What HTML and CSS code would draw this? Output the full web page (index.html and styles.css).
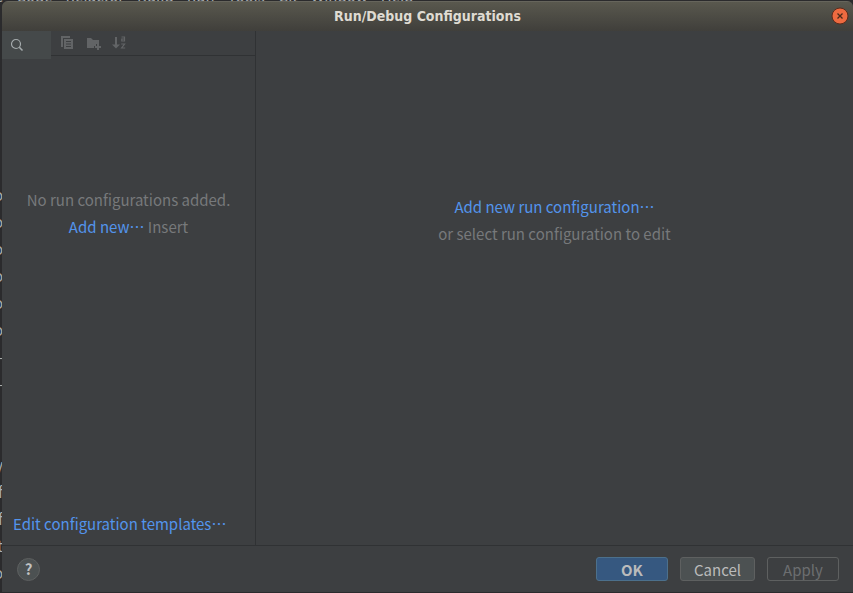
FILE: index.html
```html
<!DOCTYPE html>
<html lang="en">
<head>
    <meta charset="UTF-8">
    <meta name="viewport" content="width=device-width, initial-scale=1.0">
    <title>Run/Debug Configurations</title>
    <link rel="stylesheet" href="styles.css">
</head>
<body>
    <!-- IDE window behind the dialog -->
    <div class="backdrop" aria-hidden="true">
        <div class="backdrop-menu">
            <span>e</span><span>Code</span><span>Refactor</span><span>Build</span><span>Run</span><span>Tools</span><span>Git</span><span>Window</span><span>Help</span>
        </div>
        <div class="backdrop-code">
            <span>o</span>
            <span>o</span>
            <span>o</span>
            <span>o</span>
            <span>o</span>
            <span>o</span>
            <span>-</span>
            <span>-</span>
            <span></span>
            <span></span>
            <span>y</span>
            <span>f</span>
            <span>f</span>
            <span>t</span>
            <span>o</span>
        </div>
    </div>

    <div class="dialog" role="dialog" aria-labelledby="dialog-title">
        <header class="titlebar">
            <h1 id="dialog-title">Run/Debug Configurations</h1>
            <button class="close" type="button" aria-label="Close">
                <svg width="18" height="18" viewBox="0 0 18 18">
                    <circle cx="9" cy="9" r="8" fill="#ee6a40" stroke="#5a2c1c"/>
                    <path d="M6.5 6.5l5 5M11.5 6.5l-5 5" stroke="#4a2a1a" stroke-width="1.3"/>
                </svg>
            </button>
        </header>

        <div class="content">
            <aside class="sidebar">
                <div class="toolbar">
                    <button class="search" type="button" aria-label="Search">
                        <svg width="14" height="14" viewBox="0 0 14 14" fill="none" stroke="#a4aaac">
                            <circle cx="6" cy="6" r="4.5" stroke-width="1.2"/>
                            <path d="M9.3 9.3l3.2 3.2" stroke-width="1.6"/>
                        </svg>
                    </button>
                    <div class="tools">
                        <button type="button" aria-label="Copy configuration" disabled>
                            <svg width="14" height="14" viewBox="0 0 14 14" fill="#626466">
                                <path d="M1 0h9v2H3v9H1z"/>
                                <path fill-rule="evenodd" d="M4 3h9v10H4zM6 5v1h5V5zM6 7.500v1h5v-1zM6 10v1h5v-1z"/>
                            </svg>
                        </button>
                        <button type="button" aria-label="New folder" disabled>
                            <svg width="15" height="14" viewBox="0 0 15 14" fill="#626466">
                                <path d="M1 2h4l2 2h6v4h-3v2H8v2H1z"/>
                                <path d="M11 8h2v2h2v2h-2v2h-2v-2H9v-2h2z"/>
                            </svg>
                        </button>
                        <button type="button" aria-label="Sort configurations" disabled>
                            <svg width="14" height="14" viewBox="0 0 14 14" fill="none" stroke="#626466">
                                <path d="M3 1v9" stroke-width="2"/>
                                <path d="M-1 8.500h8l-4 4z" fill="#626466" stroke="none"/>
                                <path d="M8.500 1h3v4.500M11.500 3H8.800v2h2.700M8.200 8h3.400l-3 4h3.600" stroke-width="1.200"/>
                            </svg>
                        </button>
                    </div>
                </div>
                <div class="empty">
                    <p>No run configurations added.</p>
                    <p><a href="#">Add new<span lang="ja">…</span></a> Insert</p>
                </div>
                <a class="templates" href="#">Edit configuration templates<span lang="ja">…</span></a>
            </aside>

            <main class="details">
                <p><a href="#">Add new run configuration<span lang="ja">…</span></a></p>
                <p>or select run configuration to edit</p>
            </main>
        </div>

        <footer class="footer">
            <button class="help" type="button" aria-label="Help">?</button>
            <div class="actions">
                <button class="btn primary" type="button">OK</button>
                <button class="btn" type="button">Cancel</button>
                <button class="btn" type="button" disabled>Apply</button>
            </div>
        </footer>
    </div>
</body>
</html>
```
FILE: styles.css
```css
* {
    box-sizing: border-box;
}

body {
    margin: 0;
    min-height: 100vh;
    display: flex;
    padding: 1px 0 1px 2px;
    background: #2b2b2d;
    color: #77797b;
    font: 15px/27px "Noto Sans CJK JP", "Noto Sans", sans-serif;
    overflow: hidden;
}

h1,
p {
    margin: 0;
}

a {
    color: #5394ec;
    text-decoration: none;
}

button {
    padding: 0;
    border: 0;
    background: none;
    font: inherit;
    color: inherit;
}

svg {
    display: block;
}

/* IDE behind the dialog */
.backdrop {
    position: absolute;
    inset: 0;
    overflow: hidden;
    color: #a9adb0;
}

.backdrop-menu {
    position: absolute;
    top: -18px;
    left: -5px;
    display: flex;
    gap: 13px;
}

.backdrop-code {
    position: absolute;
    top: 181px;
    left: 0;
    width: 3px;
    display: flex;
    flex-direction: column;
    align-items: flex-end;
}

.backdrop-code span {
    height: 27px;
}

/* Dialog */
.dialog {
    position: relative;
    flex: 1;
    display: flex;
    flex-direction: column;
    background: #3d3f41;
    border-radius: 6px 6px 0 0;
    overflow: hidden;
}

.titlebar {
    display: grid;
    grid-template-columns: 1fr auto 1fr;
    align-items: center;
    height: 30px;
    padding: 0 4px 2px;
    background: linear-gradient(#59584e, #403f3b);
    border-top: 1px solid #66655c;
}

.titlebar h1 {
    grid-column: 2;
    color: #dfdbd2;
    font: bold 14px/20px "DejaVu Sans Condensed", "Noto Sans", sans-serif;
}

.close {
    justify-self: end;
}

.content {
    flex: 1;
    display: flex;
    border-bottom: 1px solid #303234;
}

.sidebar {
    width: 254px;
    display: flex;
    flex-direction: column;
    border-right: 1px solid #303234;
}

.toolbar {
    display: flex;
    align-items: flex-start;
}

.search {
    width: 49px;
    height: 28px;
    padding-left: 8px;
    background: #45494a;
}

.tools {
    flex: 1;
    display: flex;
    gap: 12px;
    height: 25px;
    padding: 5px 9px;
    border-bottom: 1px solid #303234;
}

.tools svg {
    overflow: visible;
}

.empty {
    flex: 1;
    padding-top: 127px;
    text-align: center;
}

.templates {
    padding: 0 11px 8px;
}

.details {
    flex: 1;
    padding-top: 162px;
    text-align: center;
}

.footer {
    display: flex;
    align-items: center;
    justify-content: space-between;
    height: 46px;
    padding: 0 14px 0 15px;
}

.help {
    width: 23px;
    height: 23px;
    border: 1px solid #5e6060;
    border-radius: 50%;
    background: #4c5152;
    color: #c0c2c3;
    font-weight: bold;
    line-height: 20px;
}

.actions {
    display: flex;
    gap: 12px;
}

.btn {
    min-width: 72px;
    height: 24px;
    padding: 2px 13px 0;
    border: 1px solid #5e6060;
    border-radius: 3px;
    background: #4c5152;
    color: #bbbbbb;
    line-height: 20px;
}

.btn.primary {
    border-color: #4c708c;
    background: #365880;
    font-weight: bold;
}

.btn:disabled {
    background: none;
    color: #6c6e70;
}
```
